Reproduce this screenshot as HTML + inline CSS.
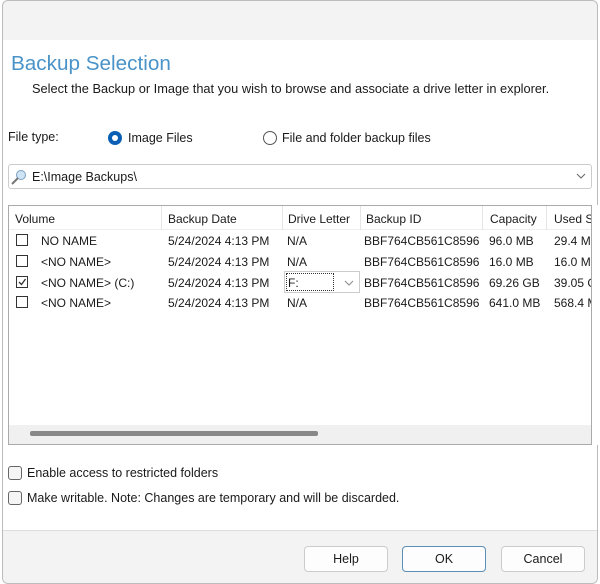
<!DOCTYPE html>
<html><head><style>
*{margin:0;padding:0;box-sizing:border-box}
body{width:600px;height:584px;position:relative;background:#fff;font-family:"Liberation Sans",sans-serif;font-size:12.5px;color:#1a1a1a;overflow:hidden}
.a{position:absolute;white-space:nowrap}
.t{font-size:12px}
.cb{position:absolute;width:12px;height:12px;border:1px solid #333;background:#fff}
.rc{position:absolute;width:14px;height:14px;border:1px solid #666;border-radius:3px;background:#f5f5f5}
.btn{position:absolute;top:546px;height:26px;border:1px solid #ccc;border-radius:4px;background:#fdfdfd;text-align:center;line-height:24px;font-size:12.5px}
</style></head><body>
<div class="a" style="left:2px;top:0;width:596px;height:584px;border:1px solid #bbb;border-radius:6px;background:#fff"></div>
<div class="a" style="left:3px;top:1px;width:594px;height:39px;background:#f3f3f3;border-radius:6px 6px 0 0"></div>
<div class="a" style="left:11px;top:52px;font-size:20.7px;color:#4a93c8">Backup Selection</div>
<div class="a" style="left:32px;top:81px;font-size:12.8px">Select the Backup or Image that you wish to browse and associate a drive letter in explorer.</div>
<div class="a" style="left:8px;top:130px">File type:</div>
<div class="a" style="left:108px;top:131px;width:14px;height:14px;border-radius:50%;background:#0a5fb4"><div style="position:absolute;left:4px;top:4px;width:6px;height:6px;border-radius:50%;background:#fff"></div></div>
<div class="a" style="left:128px;top:131px">Image Files</div>
<div class="a" style="left:263px;top:131px;width:14px;height:14px;border-radius:50%;border:1px solid #555"></div>
<div class="a" style="left:282px;top:131px">File and folder backup files</div>
<div class="a" style="left:8px;top:164px;width:584px;height:25px;border:1px solid #ccc;border-radius:3px"></div>
<svg class="a" style="left:10px;top:168px" width="18" height="18"><circle cx="11" cy="7" r="4.5" fill="#cfe4f5" stroke="#7aa0c0"/><line x1="8" y1="10" x2="2" y2="16" stroke="#777" stroke-width="2"/></svg>
<div class="a" style="left:32px;top:170px">E:\Image Backups\</div>
<svg class="a" style="left:576px;top:172px" width="10" height="8"><path d="M1 2 L5 6 L9 2" fill="none" stroke="#666"/></svg>
<div class="a" style="left:8px;top:205px;width:584px;height:240px;border:1px solid #aaa;background:#fff"></div>
<div class="a" style="left:9px;top:425px;width:582px;height:19px;background:#f0f0f0"></div>
<div class="a" style="left:30px;top:431px;width:288px;height:5px;background:#888;border-radius:2px"></div>
<div class="a" style="left:9px;top:206px;width:582px;height:24px;border-bottom:1px solid #eee"></div>
<div class="a" style="left:161px;top:206px;width:1px;height:24px;background:#e5e5e5"></div>
<div class="a" style="left:282px;top:206px;width:1px;height:24px;background:#e5e5e5"></div>
<div class="a" style="left:360px;top:206px;width:1px;height:24px;background:#e5e5e5"></div>
<div class="a" style="left:482px;top:206px;width:1px;height:24px;background:#e5e5e5"></div>
<div class="a" style="left:546px;top:206px;width:1px;height:24px;background:#e5e5e5"></div>
<div class="a t" style="left:15px;top:212px">Volume</div>
<div class="a t" style="left:168px;top:212px">Backup Date</div>
<div class="a t" style="left:288px;top:212px">Drive Letter</div>
<div class="a t" style="left:366px;top:212px">Backup ID</div>
<div class="a t" style="left:490px;top:212px">Capacity</div>
<div class="a t" style="left:554px;top:212px">Used S</div>

<div class="cb" style="left:16px;top:234px"></div>
<div class="a t" style="left:41px;top:234px">NO NAME</div>
<div class="a t" style="left:168px;top:234px">5/24/2024 4:13 PM</div>
<div class="a t" style="left:287px;top:234px">N/A</div>
<div class="a t" style="left:364px;top:234px">BBF764CB561C8596</div>
<div class="a t" style="left:489px;top:234px">96.0 MB</div>
<div class="a t" style="left:554px;top:234px">29.4 MB</div>

<div class="cb" style="left:16px;top:255px"></div>
<div class="a t" style="left:41px;top:255px">&lt;NO NAME&gt;</div>
<div class="a t" style="left:168px;top:255px">5/24/2024 4:13 PM</div>
<div class="a t" style="left:287px;top:255px">N/A</div>
<div class="a t" style="left:364px;top:255px">BBF764CB561C8596</div>
<div class="a t" style="left:489px;top:255px">16.0 MB</div>
<div class="a t" style="left:554px;top:255px">16.0 MB</div>

<div class="cb" style="left:16px;top:276px"><svg width="10" height="10" style="position:absolute;left:0;top:0"><path d="M2 5 L4.5 7.5 L8.5 2" fill="none" stroke="#333" stroke-width="1.3"/></svg></div>
<div class="a t" style="left:41px;top:276px">&lt;NO NAME&gt; (C:)</div>
<div class="a t" style="left:168px;top:276px">5/24/2024 4:13 PM</div>
<div class="a" style="left:284px;top:271px;width:76px;height:22px;border:1px solid #ccc;background:#fff"></div>
<div class="a" style="left:286px;top:273px;width:48px;height:18px;border:1px dotted #333"></div>
<div class="a t" style="left:288px;top:276px">F:</div>
<svg class="a" style="left:344px;top:279px" width="10" height="8"><path d="M1 2 L5 6 L9 2" fill="none" stroke="#888"/></svg>
<div class="a t" style="left:364px;top:276px">BBF764CB561C8596</div>
<div class="a t" style="left:489px;top:276px">69.26 GB</div>
<div class="a t" style="left:554px;top:276px">39.05 GB</div>

<div class="cb" style="left:16px;top:296px"></div>
<div class="a t" style="left:41px;top:296px">&lt;NO NAME&gt;</div>
<div class="a t" style="left:168px;top:296px">5/24/2024 4:13 PM</div>
<div class="a t" style="left:287px;top:296px">N/A</div>
<div class="a t" style="left:364px;top:296px">BBF764CB561C8596</div>
<div class="a t" style="left:489px;top:296px">641.0 MB</div>
<div class="a t" style="left:554px;top:296px">568.4 MB</div>
<div class="a" style="left:592px;top:205px;width:8px;height:240px;background:#fff"></div>
<div class="a" style="left:591px;top:205px;width:1px;height:240px;background:#aaa"></div>

<div class="rc" style="left:8px;top:466px"></div>
<div class="a" style="left:27px;top:466px">Enable access to restricted folders</div>
<div class="rc" style="left:8px;top:491px"></div>
<div class="a" style="left:27px;top:491px">Make writable. Note: Changes are temporary and will be discarded.</div>

<div class="a" style="left:3px;top:530px;width:594px;height:53px;background:#f3f3f3;border-top:1px solid #ddd;border-radius:0 0 6px 6px"></div>
<div class="btn" style="left:304px;width:84px">Help</div>
<div class="btn" style="left:402px;width:84px;border-color:#5b8fb5">OK</div>
<div class="btn" style="left:501px;width:84px">Cancel</div>
</body></html>
